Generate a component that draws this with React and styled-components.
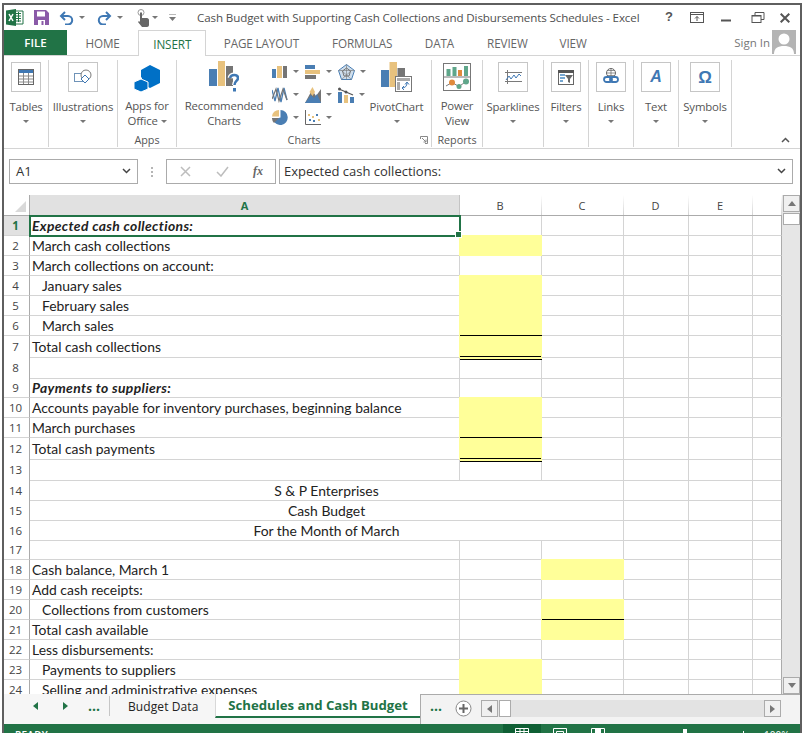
import React from "react";
import styled, { createGlobalStyle } from "styled-components";

const Global = createGlobalStyle`
  html, body { margin: 0; padding: 0; background: #fff; overflow: hidden; }
  * { box-sizing: border-box; }
  #root { width: 805px; height: 735px; overflow: hidden; }
`;

const UI = `"Open Sans", "Noto Sans", sans-serif`;
const GREEN = "#217346";
const YELLOW = "#ffff99";
const LINE = "#d4d4d4";

const Page = styled.div`
  width: 805px; height: 735px; padding: 3px 3px 2px 2px; background: #fff;
  font-family: ${UI};
`;
const Win = styled.div`
  width: 800px; height: 730px; border: 2px solid #5f5f5f; border-bottom: 0;
  display: flex; flex-direction: column; overflow: hidden; background: #fff;
`;

/* title bar */
const TitleBar = styled.div`
  height: 25px; flex: none; display: flex; align-items: center;
`;
const Qat = styled.div`
  width: 193px; height: 100%; flex: none; display: flex; align-items: center; padding-left: 2px;
`;
const QatSlot = styled.span`
  display: inline-flex; align-items: center; margin-left: ${p => p.$ml || 0}px;
`;
const Title = styled.div`
  flex: 1; font-size: 11.6px; color: #505050; white-space: nowrap; letter-spacing: -0.01em;
`;
const Controls = styled.div`
  display: flex; align-items: center; padding-right: 10px; height: 100%;
`;
const Control = styled.span`
  display: inline-flex; margin-left: ${p => p.$ml}px; color: #555;
`;
const Help = styled.span`
  font: bold 13px "Liberation Sans", sans-serif; color: #555; width: 8px; line-height: 13px; margin-top: -3px;
`;

/* tabs */
const TabsRow = styled.div`
  height: 26px; flex: none; display: flex; align-items: stretch; border-bottom: 1px solid ${LINE};
`;
const FileTab = styled.div`
  width: 63px; height: 25px; background: ${GREEN}; color: #fff; display: flex; align-items: center; justify-content: center;
  font-size: 11.5px; font-weight: 600;
`;
const Tab = styled.div`
  height: 26px; display: flex; align-items: center; font-size: 11.7px; color: #666;
  padding: 0 ${p => p.$pad}px; white-space: nowrap; letter-spacing: -0.01em;
`;
const ActiveTab = styled(Tab)`
  color: ${GREEN}; background: #fff; border: 1px solid ${LINE}; border-bottom: 0; height: 26px;
  position: relative; z-index: 1; width: 68px; justify-content: center; padding: 0;
`;
const SignIn = styled.div`
  margin-left: auto; display: flex; align-items: center; font-size: 11.5px; color: #777; padding-right: 4px; gap: 2px;
`;
const Avatar = styled.svg`
  width: 24px; height: 24px; display: block; margin-top: -1px;
`;

/* ribbon */
const Ribbon = styled.div`
  height: 93px; flex: none; display: flex; padding: 4px 0 1px; border-bottom: 1px solid ${LINE};
`;
const Group = styled.div`
  width: ${p => p.$w}px; flex: none; display: flex; flex-direction: column; border-right: 1px solid ${LINE};
`;
const GroupBody = styled.div`
  flex: 1; display: flex; min-height: 0;
`;
const GroupLabel = styled.div`
  height: 14px; line-height: 14px; font-size: 10.8px; color: #555; text-align: center; flex: none;
  display: ${p => (p.$launcher ? "grid" : "block")};
  grid-template-columns: 1fr auto 1fr;
`;
const Launcher = styled.svg`
  width: 8px; height: 8px; justify-self: end; align-self: center; margin-right: 3px;
`;
const Big = styled.div`
  flex: ${p => (p.$w ? "none" : 1)}; width: ${p => (p.$w ? p.$w + "px" : "auto")};
  display: flex; flex-direction: column; align-items: center; padding-top: 2px; min-width: 0;
`;
const IconBox = styled.div`
  width: 30px; height: 30px; border: 1px solid #c6c6c6; display: flex; align-items: center; justify-content: center; flex: none;
`;
const BigIcon = styled.div`
  height: 30px; flex: none; display: flex; align-items: flex-start; justify-content: center;
  padding-top: ${p => p.$pt || 0}px;
  & > svg { margin-top: ${p => p.$mt || 0}px; }
`;
const BigText = styled.div`
  font-size: 11.4px; line-height: ${p => (p.$two ? 15 : 16)}px; color: #555; text-align: center; white-space: nowrap;
  margin-top: ${p => (p.$two ? 5.5 : 7)}px; letter-spacing: -0.015em;
`;
const Caret = styled.span`
  display: ${p => (p.$inline ? "inline-block" : "block")}; width: 0; height: 0; flex: none;
  border-left: 3px solid transparent; border-right: 3px solid transparent; border-top: 3px solid #777;
  margin-top: ${p => p.$mt ?? 0}px; margin-left: ${p => p.$ml ?? 0}px; vertical-align: middle;
`;
const SmallGrid = styled.div`
  width: 98px; flex: none; display: grid; grid-template-columns: 33px 33px 32px; grid-auto-rows: 23px;
`;
const SmallBtn = styled.div`
  display: flex; align-items: center; padding-left: 1px;
`;
const RibbonEnd = styled.div`
  flex: 1; display: flex; align-items: flex-end; justify-content: flex-end; padding: 0 10px 4px 0;
`;
const IconText = styled.span`
  color: #3f78b4; font-weight: 700; line-height: 1;
  font-family: "Liberation Sans", sans-serif;
  font-style: ${p => (p.$italic ? "italic" : "normal")}; font-size: ${p => p.$size}px;
`;

/* formula bar */
const FormulaBar = styled.div`
  height: 46px; flex: none; display: flex; align-items: flex-start; padding: 10px 7px 0 5px;
`;
const NameBox = styled.div`
  width: 129px; height: 25px; border: 1px solid #ababab; display: flex; align-items: center; justify-content: space-between;
  padding: 0 6px 2px; font-size: 13px; color: #333;
`;
const Dots = styled.div`
  width: 28px; display: flex; flex-direction: column; align-items: center; gap: 2px; padding-top: 8px;
  & > i { width: 2px; height: 2px; background: #b5b5b5; display: block; }
`;
const FxBox = styled.div`
  width: 110px; height: 25px; border: 1px solid #ababab; display: grid; grid-template-columns: 37px 37px 1fr; align-items: center; justify-items: center;
`;
const FxText = styled.span`
  font: italic bold 12px "Liberation Serif", serif; color: #666;
`;
const FormulaInput = styled.div`
  flex: 1; margin-left: 3px; height: 25px; border: 1px solid #ababab; display: flex; align-items: center; justify-content: space-between;
  padding: 0 6px 2px 4px; font-size: 13px; color: #333;
`;

/* sheet */
const Sheet = styled.div`
  height: 499px; flex: none; display: flex; overflow: hidden;
`;
const Grid = styled.div`
  width: 778px; flex: none; overflow: hidden;
`;
const cols = "26px 430px 82px 82px 65px 64px 29px";
const HeaderRow = styled.div`
  display: grid; grid-template-columns: ${cols}; height: 21px; border-bottom: 1px solid #ababab;
`;
const Corner = styled.div`
  border-right: 1px solid #ababab; display: flex; align-items: center; justify-content: flex-end; padding: 2px 3px 0 0;
`;
const ColHead = styled.div`
  font-size: 11px; display: flex; align-items: center; justify-content: center; padding-right: ${p => (p.$sel ? 0 : 2)}px;
  color: ${p => (p.$sel ? GREEN : "#444")}; font-weight: ${p => (p.$sel ? 700 : 400)};
  background: ${p => (p.$sel ? "#e1e1e1" : `linear-gradient(to bottom, #fff, ${LINE}) right / 1px 100% no-repeat`)};
  ${p => (p.$sel ? "border-right: 1px solid #c4c4c4;" : "")}
`;
const Row = styled.div`
  display: grid; grid-template-columns: ${cols}; height: ${p => p.$h}px;
  line-height: ${p => (p.$h === 21 ? 21 : 19)}px;
`;
const RowHead = styled.div`
  font-size: 11.5px; display: flex; align-items: center; justify-content: center;
  color: ${p => (p.$sel ? GREEN : "#444")}; font-weight: ${p => (p.$sel ? 700 : 400)};
  background: ${p => (p.$sel ? "#e1e1e1" : "#fff")};
  border-right: 1px solid #ababab; border-bottom: 1px solid ${LINE}; padding-right: 2px;
`;
const Cell = styled.div`
  border-right: 1px solid ${p => (p.$edge ? "#ababab" : LINE)}; border-bottom: 1px solid ${LINE};
  font-family: "Lato", "Open Sans", sans-serif; font-size: 13.9px; color: #222; white-space: nowrap;
  padding-left: ${p => 2 + (p.$indent ? 10 : 0)}px;
  font-weight: ${p => (p.$bold ? 700 : 400)}; font-style: ${p => (p.$bold ? "italic" : "normal")};
  letter-spacing: ${p => (p.$bold ? "0.35px" : "0")};
  font-variant-ligatures: common-ligatures;
`;
const Merged = styled(Cell)`
  grid-column: span 3; text-align: center; padding-left: 0; padding-right: 0; padding-top: 1px;
`;
const FillCell = styled(Cell)`
  background: ${YELLOW}; border-color: ${YELLOW}; position: relative; z-index: 1;
  box-shadow: ${p => {
    const s = [p.$top ? "0 -1px 0 #000" : `0 -1px 0 ${YELLOW}`];
    if (p.$double) s.push("inset 0 -1px 0 #000", `0 1px 0 ${YELLOW}`, "0 2px 0 #000");
    s.push(`-1px 0 0 ${YELLOW}`, `-1px -1px 0 ${YELLOW}`);
    return s.join(", ");
  }};
`;
const Selected = styled(Cell)`
  position: relative; z-index: 2; outline: 2px solid ${GREEN}; outline-offset: -1px;
`;
const Handle = styled.span`
  position: absolute; right: -2px; bottom: -2px; width: 5px; height: 5px; background: ${GREEN}; outline: 1px solid #fff;
`;
const VScroll = styled.div`
  width: 18px; flex: none; background: #e6e6e6; display: flex; flex-direction: column; align-items: center; padding-left: 1px;
`;
const ScrollBtn = styled.div`
  width: 17px; height: 17px; background: #f0f0f0; border: 1px solid #ababab; display: flex; align-items: center; justify-content: center; flex: none;
`;
const VThumb = styled.div`
  width: 17px; height: 12px; margin-top: 1px; background: #fff; border: 1px solid #ababab; flex: none;
`;
const Spacer = styled.div`flex: 1;`;

/* sheet tabs */
const SheetTabs = styled.div`
  height: 30px; flex: none; display: flex; background: #f6f6f6;
`;
const SheetNav = styled.div`
  width: 211px; flex: none; display: flex; align-items: center; height: 24px;
`;
const NavItem = styled.span`
  display: inline-flex; margin-left: ${p => p.$ml}px; color: ${GREEN}; font-weight: 700; font-size: 14px; line-height: 14px;
`;
const NavSep = styled.span`
  width: 1px; height: 20px; background: #c6c6c6; margin-left: ${p => p.$ml}px;
`;
const SheetName = styled.span`
  font-size: 12px; color: #222; margin-left: 18px; letter-spacing: 0.1px;
`;
const ActiveSheet = styled.div`
  width: 205px; height: 24px; flex: none; background: #fff; border-bottom: 2px solid ${GREEN}; border-left: 1px solid #d8d8d8;
  color: ${GREEN}; font-family: "Open Sans", sans-serif; font-weight: 700; font-size: 13.2px; display: flex; align-items: center; justify-content: center;
  white-space: nowrap;
`;
const SheetRight = styled.div`
  flex: 1; border-top: 1px solid #ababab; height: 30px; display: flex; background: #f3f3f3; align-items: flex-start;
  box-shadow: inset 1px 0 0 #ababab;
`;
const More = styled.span`
  margin-left: 10px; width: 25px; color: ${GREEN}; font-weight: 700; font-size: 14px; line-height: 22px;
`;
const AddCircle = styled.svg`
  width: 17px; height: 17px; margin: 5px 0 0 0; flex: none;
`;
const HScroll = styled.div`
  width: 300px; margin: 5px 0 0 9px; height: 17px; background: #e3e3e3; display: flex; flex: none;
`;
const HThumb = styled.div`
  width: 12px; height: 17px; margin-left: 1px; background: #fff; border: 1px solid #ababab;
`;

/* status */
const Status = styled.div`
  height: 9px; flex: none; background: ${GREEN}; display: flex; overflow: hidden; color: #fff; font-size: 10px;
`;
const Ready = styled.span`
  padding: 5px 0 0 11px; line-height: 12px; font-weight: 600; letter-spacing: 0.2px; width: 499px; flex: none;
`;
const ViewBtn = styled.div`
  width: 38px; flex: none; height: 9px; background: ${p => (p.$on ? "#0f5f34" : "transparent")}; display: flex; justify-content: center; padding-top: 4px;
`;
const Tick = styled.span`
  width: ${p => p.$w}px; height: ${p => p.$h}px; background: #fff; margin-left: ${p => p.$ml}px; align-self: flex-end; flex: none;
`;
const Pct = styled.span`
  margin-left: 20px; padding-top: 5px; line-height: 12px; font-size: 10px;
`;

const Sv = ({ w, h, children }) => (
  <svg width={w} height={h} viewBox={`0 0 ${w} ${h}`} style={{ display: "block", flex: "none" }}>{children}</svg>
);
const B = "#4a7eb3", T = "#e8c27e", G = "#757575";

const ExcelLogo = () => (
  <Sv w={18} h={17}>
    <path d="M8 2h9v13H8z" fill="#fff" stroke="#217346" />
    <path d="M10 4.5h5M10 7h5M10 9.5h5M10 12h5M12.5 3v10" stroke="#217346" />
    <path d="M0 1.5 10 0v17L0 15.5z" fill="#217346" />
    <path d="M3 5l4 7M7 5l-4 7" stroke="#fff" strokeWidth="1.5" />
  </Sv>
);
const Save = () => (
  <Sv w={15} h={15}>
    <path d="M0 0h12l3 3v12H0z" fill="#8a5aa8" />
    <rect x="3" y="1.5" width="8" height="5" fill="#fff" />
    <rect x="4" y="10" width="7" height="5" fill="#fff" />
    <rect x="7.5" y="11" width="2" height="4" fill="#8a5aa8" />
  </Sv>
);
const Undo = ({ flip }) => (
  <Sv w={15} h={14}>
    <g transform={flip ? "translate(15 0) scale(-1 1)" : undefined} fill="none" stroke="#3f78b4" strokeWidth="2">
      <path d="M6 1 2 5l4 4" />
      <path d="M2 5h7a4.2 4.2 0 0 1 0 8.4H6" />
    </g>
  </Sv>
);
const Touch = () => (
  <Sv w={13} h={18}>
    <circle cx="5" cy="3.5" r="3" fill="none" stroke="#9a9a9a" />
    <path d="M4 3.5h2V9h5c1 0 2 1 2 2v5c0 1-1 2-2 2H6L2 13l1-1 1 1z" fill="#666" />
  </Sv>
);
const Customize = () => (
  <Sv w={7} h={7}>
    <path d="M0 0h7" stroke="#777" />
    <path d="M0 3h7L3.5 7z" fill="#777" />
  </Sv>
);
const RibbonDisplay = () => (
  <Sv w={14} h={11}>
    <rect x=".5" y=".5" width="13" height="10" fill="none" stroke="#555" />
    <path d="M.5 2.5h13" stroke="#555" />
    <path d="M7 9V4.5M5 6.5l2-2 2 2" fill="none" stroke="#555" />
  </Sv>
);
const Min = () => (<Sv w={10} h={11}><path d="M0 8.5h10" stroke="#555" strokeWidth="2" /></Sv>);
const Restore = () => (
  <Sv w={14} h={11}>
    <rect x="1" y="3.5" width="9" height="7" fill="none" stroke="#555" />
    <path d="M4 3V.5h9v7h-3" fill="none" stroke="#555" />
    <path d="M1 4h9" stroke="#555" />
  </Sv>
);
const Close = () => (<Sv w={10} h={10}><path d="M.7.7l8.6 8.6M9.3.7.7 9.3" stroke="#555" strokeWidth="2" /></Sv>);

const TableIcon = () => (
  <Sv w={16} h={16}>
    <rect x=".5" y=".5" width="15" height="15" fill="#fff" stroke="#666" />
    <rect x="1" y="1" width="14" height="3" fill="#3f78b4" />
    <path d="M1 7h14M1 10h14M1 13h14M5.5 4v11M10.5 4v11" stroke="#8a8a8a" />
  </Sv>
);
const IllusIcon = () => (
  <Sv w={18} h={16}>
    <rect x=".5" y="4.5" width="10" height="8" fill="none" stroke="#6f93b8" />
    <circle cx="12" cy="6" r="5" fill="#fff" stroke="#7a7a7a" />
    <path d="M7 10l4-4 4 4-4 4z" fill="#fff" stroke="#3f78b4" />
  </Sv>
);
const AppsIcon = () => (
  <Sv w={27} h={27}>
    <path d="M16 0l10 5v13l-10 5-8-4V13l-1-1V5z" fill="#0070c6" />
    <path d="M7 14l7 3v7l-7 3-7-3v-7z" fill="#0070c6" stroke="#fff" strokeWidth="1" />
  </Sv>
);
const RecIcon = () => (
  <Sv w={30} h={33}>
    <rect x="0" y="9" width="8" height="17" fill={B} />
    <rect x="9" y="1" width="7" height="25" fill={T} />
    <rect x="17" y="6" width="7" height="20" fill={G} />
    <path d="M21 18c1-4 8-4 8 0 0 3-3.500 3-3.500 7" fill="none" stroke="#fff" strokeWidth="5" />
    <path d="M21 18c1-4 8-4 8 0 0 3-3.500 3-3.500 7" fill="none" stroke="#3f78b4" strokeWidth="2.500" />
    <rect x="24" y="28" width="3" height="3.500" fill="#3f78b4" />
  </Sv>
);
const ColChart = () => (<Sv w={16} h={13}><rect y="4" width="4" height="9" fill={B} /><rect x="5" y="1" width="5" height="12" fill={T} /><rect x="11" y="1" width="4" height="12" fill={G} /></Sv>);
const BarChart = () => (<Sv w={16} h={15}><rect y="1" width="10" height="4" fill={B} /><rect y="6" width="15" height="4" fill={T} /><rect y="11" width="11" height="4" fill={G} /></Sv>);
const Radar = () => (<Sv w={17} h={16}><path d="M8.500.5 16.500 6.500l-3 9h-10l-3-9z" fill="#cfdeec" stroke={B} /><path d="M8.500 4l4 3-1.500 5h-5L4.500 7z" fill="none" stroke={G} /><path d="M8.500.5V15.500M.5 6.500l16 0M3.500 15.500l10-9M13.500 15.500l-10-9" stroke={G} strokeWidth=".6" /></Sv>);
const LineChart = () => (<Sv w={16} h={16}><path d="M0 3l3 11 3-13 3 14 3-14 3 12" fill="none" stroke={B} strokeWidth="1.300" /><path d="M0 12l4-10 3 12 4-12 4 11" fill="none" stroke={G} strokeWidth="1.200" /></Sv>);
const AreaChart = () => (<Sv w={16} h={16}><path d="M0 16 7 3l4 6 5-7v14z" fill={G} /><path d="M4.500 5l3-5 2.500 5-2.500 4z" fill={T} /><path d="M0 16l6-8 3 3 3-4 4 9z" fill={B} /></Sv>);
const StatChart = () => (<Sv w={16} h={16}><rect y="5" width="4" height="11" fill={B} /><rect x="6" y="8" width="4" height="8" fill={T} /><rect x="12" y="10" width="4" height="6" fill={B} /><path d="M1 2l7 3 7 3" fill="none" stroke="#555" strokeWidth="1.300" /><circle cx="1.500" cy="2" r="1.500" fill="#555"/><circle cx="8" cy="5" r="1.500" fill="#555"/></Sv>);
const Pie = () => (<Sv w={16} h={15}><path d="M8.500 0a7.500 7.500 0 1 1-7.500 9.500l7.500-2z" fill={B} /><path d="M7 0v6.500H0A7 7 0 0 1 7 0z" fill={T} /><path d="M0 8h7L2 13a7 7 0 0 1-2-5z" fill={G} /></Sv>);
const Scatter = () => (<Sv w={16} h={15}><path d="M.5 0v14.500H16" fill="none" stroke="#666" /><g fill={B}><rect x="4" y="9" width="2" height="2"/><rect x="11" y="4" width="2" height="2"/><rect x="8" y="10" width="2" height="2" /></g><g fill={T}><rect x="7" y="6" width="2" height="2"/><rect x="3" y="4" width="2" height="2"/><rect x="13" y="9" width="2" height="2"/></g></Sv>);
const PivotIcon = () => (
  <Sv w={31} h={30}>
    <rect x="0" y="8" width="8" height="17" fill={B} />
    <rect x="8.500" y="0" width="7.500" height="25" fill={T} />
    <rect x="16.500" y="6" width="7.500" height="10" fill={G} />
    <rect x="14.500" y="14.500" width="16" height="15" fill="#fff" stroke="#777" />
    <rect x="16" y="16" width="13" height="3" fill="#aaa" />
    <rect x="16" y="20" width="3" height="8" fill="#aaa" />
    <path d="M21 26c3 0 5-2 5-5M24 22.500l2-2.500 2 2.500M23 24l-2 2 2 2" fill="none" stroke="#3f78b4" />
  </Sv>
);
const PowerIcon = () => (
  <Sv w={28} h={28}>
    <rect x=".5" y=".5" width="27" height="27" fill="#fff" stroke="#777" />
    <path d="M1 14h26" stroke="#777" />
    <rect x="3.500" y="6" width="4" height="7" fill="#5fa68a" /><rect x="9.500" y="4" width="4" height="9" fill="#5fa68a" />
    <rect x="15" y="7" width="4" height="6" fill="#e08a3c" /><rect x="21" y="3" width="4" height="10" fill="#5fa68a" />
    <path d="M3 23l6-3.500 7 4 7-5" fill="none" stroke="#7a7a7a" />
    <circle cx="9" cy="19.500" r="3" fill="#e08a3c" /><circle cx="16" cy="23.500" r="2.500" fill="#5fa68a" /><circle cx="23" cy="18.500" r="3" fill="#5fa68a" />
  </Sv>
);
const SparkIcon = () => (
  <Sv w={17} h={14}>
    <path d="M2.500 0v14M0 11.500h17M0 2.500h17" stroke="#7a7a7a" />
    <path d="M1 10l3-4 2 3 3-4 2 3 3-4 2 2" fill="none" stroke="#3f78b4" />
  </Sv>
);
const FilterIcon = () => (
  <Sv w={16} h={15}>
    <rect x=".5" y=".5" width="15" height="14" fill="#fff" stroke="#666" />
    <rect x="0" y="0" width="16" height="3" fill="#555" />
    <path d="M2 5h5M2 8h5M2 11h3" stroke="#4a8bc2" strokeWidth="1.500" />
    <path d="M7 5h8l-3 4v4l-2-1V9z" fill="#666" />
  </Sv>
);
const LinksIcon = () => (
  <Sv w={16} h={18}>
    <circle cx="8" cy="5" r="4.500" fill="#fff" stroke="#666" />
    <path d="M3.500 5h9M8 .5v9M4.500 2.500h7M4.500 7.500h7" stroke="#666" strokeWidth=".7" />
    <rect x="1" y="9" width="8" height="5" rx="2.500" fill="#fff" stroke="#3f78b4" strokeWidth="1.800" />
    <rect x="7" y="9" width="8" height="5" rx="2.500" fill="none" stroke="#3f78b4" strokeWidth="1.800" />
  </Sv>
);
const Chevron = ({ c = "#444" }) => (<Sv w={9} h={6}><path d="M1 1l3.500 3.500L8 1" fill="none" stroke={c} strokeWidth="1.500" /></Sv>);
const Up = () => (<Sv w={9} h={6}><path d="M1 5l3.500-3.500L8 5" fill="none" stroke="#555" strokeWidth="1.500" /></Sv>);
const Tri = ({ d, c = "#777" }) => {
  const p = { u: "M0 5 4 0l4 5z", d: "M0 0h8L4 5z", l: "M5 0v8L0 4z", r: "M0 0v8l5-4z" }[d];
  const w = d === "u" || d === "d" ? 8 : 5; const h = d === "u" || d === "d" ? 5 : 8;
  return <Sv w={w} h={h}><path d={p} fill={c} /></Sv>;
};
const NormalView = () => (<Sv w={14} h={6}><path d="M.5 6V.5h13V6M5 0v6M9 0v6M0 3.500h14" fill="none" stroke="#fff" /></Sv>);
const LayoutView = () => (<Sv w={14} h={6}><path d="M.5 6V.5h13V6M3.500 6V3.500h7V6" fill="none" stroke="#fff" /></Sv>);
const BreakView = () => (<Sv w={14} h={6}><path d="M.5 6V.5h13V6" fill="none" stroke="#fff" /><rect x="4" y="0" width="6" height="6" fill="#fff" /></Sv>);

const BigBtn = ({ icon, text }) => (
  <Big>
    <IconBox>{icon}</IconBox>
    <BigText>{text}</BigText>
    <Caret $mt={5} />
  </Big>
);

const small = [ColChart, BarChart, Radar, LineChart, AreaChart, StatChart, Pie, Scatter];
const R = (n, h, a, o = {}) => ({ n, h, a, ...o });
const rows = [
  R(1, 20, "Expected cash collections:", { bold: true, sel: true }),
  R(2, 20, "March cash collections", { b: {} }),
  R(3, 20, "March collections on account:"),
  R(4, 20, "January sales", { indent: true, b: {} }),
  R(5, 20, "February sales", { indent: true, b: {} }),
  R(6, 20, "March sales", { indent: true, b: {} }),
  R(7, 21, "Total cash collections", { b: { top: true, double: true } }),
  R(8, 21, ""),
  R(9, 20, "Payments to suppliers:", { bold: true }),
  R(10, 20, "Accounts payable for inventory purchases, beginning balance", { b: {} }),
  R(11, 20, "March purchases", { b: {} }),
  R(12, 21, "Total cash payments", { b: { top: true, double: true } }),
  R(13, 21, ""),
  R(14, 20, "S & P Enterprises", { merged: true }),
  R(15, 20, "Cash Budget", { merged: true }),
  R(16, 20, "For the Month of March", { merged: true }),
  R(17, 20, ""),
  R(18, 20, "Cash balance, March 1", { c: {} }),
  R(19, 20, "Add cash receipts:"),
  R(20, 20, "Collections from customers", { indent: true, c: {} }),
  R(21, 20, "Total cash available", { c: { top: true } }),
  R(22, 20, "Less disbursements:"),
  R(23, 20, "Payments to suppliers", { indent: true, b: {} }),
  R(24, 20, "Selling and administrative expenses", { indent: true, b: {} }),
];

const SheetCell = ({ v }) => (v ? <FillCell $top={v.top} $double={v.double} /> : <Cell />);

export default function App() {
  return (
    <Page>
      <Global />
      <Win>
        <TitleBar>
          <Qat>
            <QatSlot><ExcelLogo /></QatSlot>
            <QatSlot $ml={10}><Save /></QatSlot>
            <QatSlot $ml={10}><Undo /></QatSlot>
            <QatSlot $ml={5}><Caret $inline /></QatSlot>
            <QatSlot $ml={12}><Undo flip /></QatSlot>
            <QatSlot $ml={5}><Caret $inline /></QatSlot>
            <QatSlot $ml={13}><Touch /></QatSlot>
            <QatSlot $ml={3}><Caret $inline /></QatSlot>
            <QatSlot $ml={11}><Customize /></QatSlot>
          </Qat>
          <Title>Cash Budget with Supporting Cash Collections and Disbursements Schedules - Excel</Title>
          <Controls>
            <Help>?</Help>
            <Control $ml={17}><RibbonDisplay /></Control>
            <Control $ml={17}><Min /></Control>
            <Control $ml={20}><Restore /></Control>
            <Control $ml={15}><Close /></Control>
          </Controls>
        </TitleBar>

        <TabsRow>
          <FileTab>FILE</FileTab>
          <Tab $pad={18.5}>HOME</Tab>
          <ActiveTab>INSERT</ActiveTab>
          <Tab $pad={17.5}>PAGE LAYOUT</Tab>
          <Tab $pad={15.5}>FORMULAS</Tab>
          <Tab $pad={17}>DATA</Tab>
          <Tab $pad={16}>REVIEW</Tab>
          <Tab $pad={16}>VIEW</Tab>
          <SignIn>
            Sign In
            <Avatar viewBox="0 0 24 24">
              <rect width="24" height="24" fill="#b4b4b4" />
              <circle cx="12" cy="9" r="5.500" fill="#fff" />
              <path d="M2 24c0-6 4-8 10-8s10 2 10 8z" fill="#fff" />
            </Avatar>
          </SignIn>
        </TabsRow>

        <Ribbon>
          <Group $w={45}><GroupBody><BigBtn icon={<TableIcon />} text="Tables" /></GroupBody></Group>
          <Group $w={69}><GroupBody><BigBtn icon={<IllusIcon />} text="Illustrations" /></GroupBody></Group>
          <Group $w={59}>
            <GroupBody>
              <Big>
                <BigIcon $pt={3}><AppsIcon /></BigIcon>
                <BigText $two>Apps for<br />Office <Caret $inline /></BigText>
              </Big>
            </GroupBody>
            <GroupLabel>Apps</GroupLabel>
          </Group>
          <Group $w={255}>
            <GroupBody>
              <Big $w={94}>
                <BigIcon $mt={-2}><RecIcon /></BigIcon>
                <BigText $two>Recommended<br />Charts</BigText>
              </Big>
              <SmallGrid>
                {small.map((I, i) => (
                  <SmallBtn key={i}><I /><Caret $ml={5} /></SmallBtn>
                ))}
              </SmallGrid>
              <Big $w={55}>
                <BigIcon><PivotIcon /></BigIcon>
                <BigText>PivotChart</BigText>
                <Caret $mt={5} />
              </Big>
            </GroupBody>
            <GroupLabel $launcher>
              <span />
              <span>Charts</span>
              <Launcher viewBox="0 0 8 8"><path d="M.5 3V.5H7.500V7.500H5M2 2l4 4M3.500 6H6V3.500" fill="none" stroke="#888" /></Launcher>
            </GroupLabel>
          </Group>
          <Group $w={51}>
            <GroupBody>
              <Big>
                <BigIcon $pt={1}><PowerIcon /></BigIcon>
                <BigText $two>Power<br />View</BigText>
              </Big>
            </GroupBody>
            <GroupLabel>Reports</GroupLabel>
          </Group>
          <Group $w={61}><GroupBody><BigBtn icon={<SparkIcon />} text="Sparklines" /></GroupBody></Group>
          <Group $w={45}><GroupBody><BigBtn icon={<FilterIcon />} text="Filters" /></GroupBody></Group>
          <Group $w={45}><GroupBody><BigBtn icon={<LinksIcon />} text="Links" /></GroupBody></Group>
          <Group $w={45}><GroupBody><BigBtn icon={<IconText $italic $size={16}>A</IconText>} text="Text" /></GroupBody></Group>
          <Group $w={53}><GroupBody><BigBtn icon={<IconText $size={17}>Ω</IconText>} text="Symbols" /></GroupBody></Group>
          <RibbonEnd><Up /></RibbonEnd>
        </Ribbon>

        <FormulaBar>
          <NameBox>A1<Chevron /></NameBox>
          <Dots><i /><i /><i /></Dots>
          <FxBox>
            <Sv w={11} h={11}><path d="M1 1l9 9M10 1l-9 9" stroke="#bdbdbd" strokeWidth="1.500" /></Sv>
            <Sv w={13} h={11}><path d="M1 6l4 4 7-9" fill="none" stroke="#bdbdbd" strokeWidth="1.500" /></Sv>
            <FxText>fx</FxText>
          </FxBox>
          <FormulaInput>Expected cash collections:<Chevron /></FormulaInput>
        </FormulaBar>

        <Sheet>
          <Grid>
            <HeaderRow>
              <Corner><Sv w={11} h={11}><path d="M11 0v11H0z" fill="#d9d9d9" /></Sv></Corner>
              <ColHead $sel>A</ColHead>
              <ColHead>B</ColHead>
              <ColHead>C</ColHead>
              <ColHead>D</ColHead>
              <ColHead>E</ColHead>
              <ColHead />
            </HeaderRow>
            {rows.map(r => (
              <Row key={r.n} $h={r.h}>
                <RowHead $sel={r.sel}>{r.n}</RowHead>
                {r.merged ? (
                  <Merged>{r.a}</Merged>
                ) : r.sel ? (
                  <Selected $bold>{r.a}<Handle /></Selected>
                ) : (
                  <>
                    <Cell $bold={r.bold} $indent={r.indent}>{r.a}</Cell>
                    <SheetCell v={r.b} />
                    <SheetCell v={r.c} />
                  </>
                )}
                {r.sel && (<><Cell /><Cell /></>)}
                <Cell />
                <Cell />
                <Cell $edge />
              </Row>
            ))}
          </Grid>
          <VScroll>
            <ScrollBtn><Tri d="u" /></ScrollBtn>
            <VThumb />
            <Spacer />
            <ScrollBtn><Tri d="d" /></ScrollBtn>
          </VScroll>
        </Sheet>

        <SheetTabs>
          <SheetNav>
            <NavItem $ml={29}><Tri d="l" c={GREEN} /></NavItem>
            <NavItem $ml={25}><Tri d="r" c={GREEN} /></NavItem>
            <NavItem $ml={20}>...</NavItem>
            <NavSep $ml={9} />
            <SheetName>Budget Data</SheetName>
          </SheetNav>
          <ActiveSheet>Schedules and Cash Budget</ActiveSheet>
          <SheetRight>
            <More>...</More>
            <AddCircle viewBox="0 0 17 17">
              <circle cx="8.500" cy="8.500" r="7.500" fill="#fff" stroke="#8a8a8a" />
              <path d="M8.500 4v9M4 8.500h9" stroke="#666" strokeWidth="2" />
            </AddCircle>
            <HScroll>
              <ScrollBtn><Tri d="l" /></ScrollBtn>
              <HThumb />
              <Spacer />
              <ScrollBtn><Tri d="r" /></ScrollBtn>
            </HScroll>
          </SheetRight>
        </SheetTabs>

        <Status>
          <Ready>READY</Ready>
          <ViewBtn $on><NormalView /></ViewBtn>
          <ViewBtn><LayoutView /></ViewBtn>
          <ViewBtn><BreakView /></ViewBtn>
          <Tick $w={4} $h={4} $ml={66} />
          <Tick $w={1} $h={2} $ml={56} />
          <Pct>100%</Pct>
        </Status>
      </Win>
    </Page>
  );
}
